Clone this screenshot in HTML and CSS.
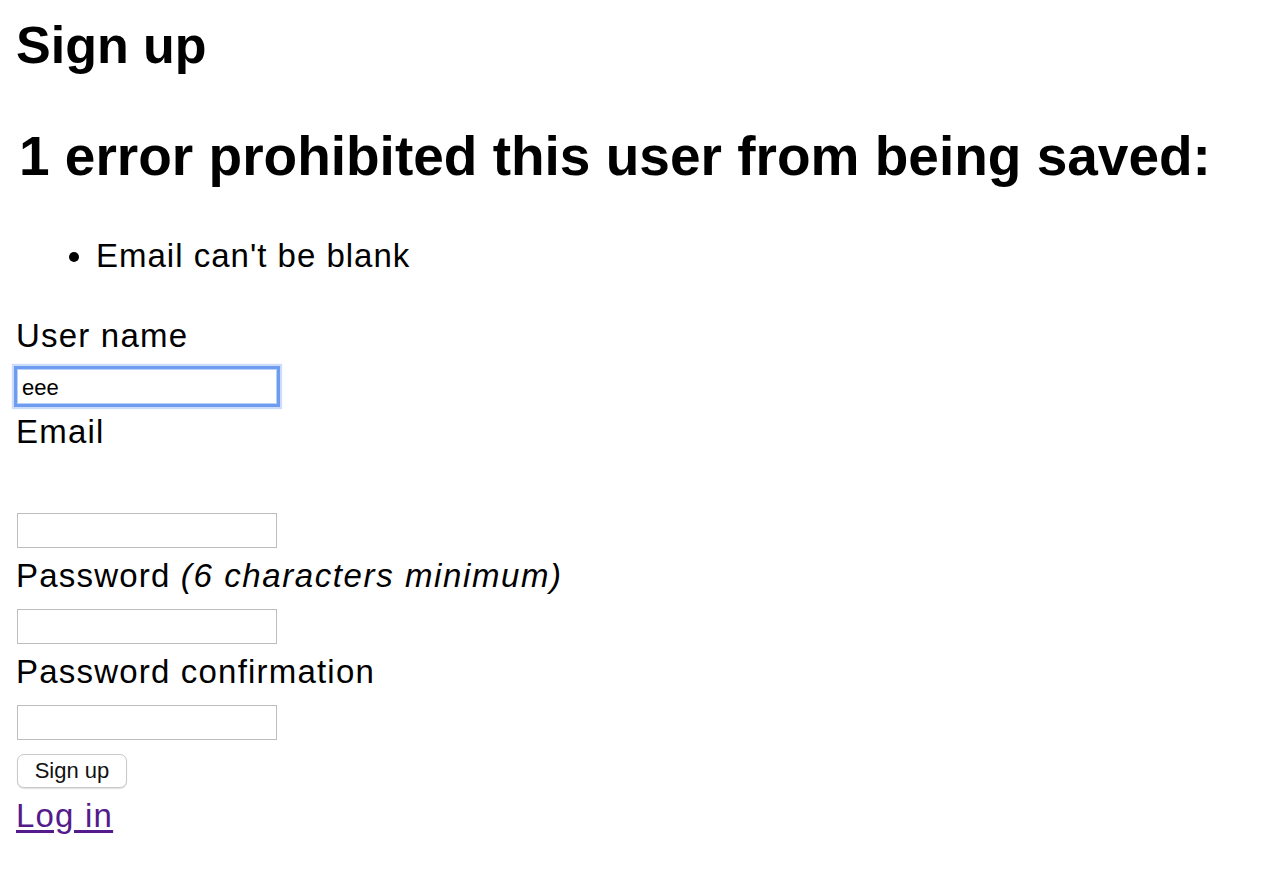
FILE: index.html
```html
<!DOCTYPE html>
<html lang="en">
<head>
    <meta charset="UTF-8">
    <meta name="viewport" content="width=device-width, initial-scale=1.0">
    <title>Sign up</title>
    <link rel="stylesheet" href="styles.css">
</head>
<body>
    <h1 class="page-title">Sign up</h1>

    <form class="new-user" action="#" method="post">
        <div id="error_explanation" class="error-box">
            <h2 class="error-title">1 error prohibited this user from being saved:</h2>
            <ul class="error-list">
                <li>Email can't be blank</li>
            </ul>
        </div>

        <div class="field">
            <label class="field-label" for="user_username">User name</label>
            <div class="field-input">
                <input class="text-input is-focused" type="text" id="user_username" value="eee">
            </div>
        </div>

        <div class="field field-error">
            <label class="field-label" for="user_email">Email</label>
            <div class="field-input">
                <input class="text-input" type="email" id="user_email" value="">
            </div>
        </div>

        <div class="field">
            <label class="field-label" for="user_password">Password <em class="hint">(6 characters minimum)</em></label>
            <div class="field-input">
                <input class="text-input" type="password" id="user_password">
            </div>
        </div>

        <div class="field">
            <label class="field-label" for="user_password_confirmation">Password confirmation</label>
            <div class="field-input">
                <input class="text-input" type="password" id="user_password_confirmation">
            </div>
        </div>

        <div class="actions">
            <button class="submit-btn" type="button">Sign up</button>
        </div>
    </form>

    <a class="login-link" href="#">Log in</a>
</body>
</html>
```

FILE: styles.css
```css
/* Page */
body {
    font-family: "Liberation Sans", Arial, sans-serif;
    color: #000;
    background-color: #fff;
    margin: 0;
    padding: 0 16px;
}

.page-title {
    font-size: 52px;
    font-weight: bold;
    line-height: 64px;
    margin: 13px 0 0;
}

/* Error messages */
.error-title {
    font-size: 55px;
    font-weight: bold;
    line-height: 72px;
    margin: 43px 0 0 3px;
}

.error-list {
    margin: 40px 0 32px;
    padding-left: 80px;
    font-size: 33px;
    line-height: 48px;
    letter-spacing: 1px;
}

/* Form fields */
.field-label {
    display: block;
    font-size: 33px;
    line-height: 48px;
    letter-spacing: 1.2px;
}

.field-label .hint {
    letter-spacing: 1.6px;
}

.field-error .field-label {
    margin-bottom: 48px;
}

.field-input {
    box-sizing: border-box;
    height: 48px;
    padding: 9px 0 0 1px;
}

.text-input {
    display: block;
    box-sizing: border-box;
    width: 260px;
    height: 35px;
    margin: 0;
    padding: 2px 4px 0;
    border: 1px solid #bdbdbd;
    background-color: #fff;
    font-family: "Liberation Sans", Arial, sans-serif;
    font-size: 22px;
    color: #000;
    outline: none;
}

.text-input.is-focused {
    border-color: #b9cff6;
    box-shadow: 0 0 0 3px #6d9cf0, 0 0 1px 5px rgba(109, 156, 240, 0.35);
}

.actions {
    box-sizing: border-box;
    height: 48px;
    padding: 10px 0 0 1px;
}

.submit-btn {
    display: block;
    box-sizing: border-box;
    width: 110px;
    height: 34px;
    margin: 0;
    padding: 0;
    border: 1px solid #c9c9c9;
    border-radius: 7px;
    background-color: #fff;
    box-shadow: 0 1px 1px rgba(0, 0, 0, 0.12);
    font-family: "Liberation Sans", Arial, sans-serif;
    font-size: 22px;
    color: #111;
}

.login-link {
    display: inline-block;
    font-size: 33px;
    line-height: 48px;
    letter-spacing: 1.2px;
    color: #551a8b;
    text-decoration: underline;
    text-underline-offset: 3px;
}
```
